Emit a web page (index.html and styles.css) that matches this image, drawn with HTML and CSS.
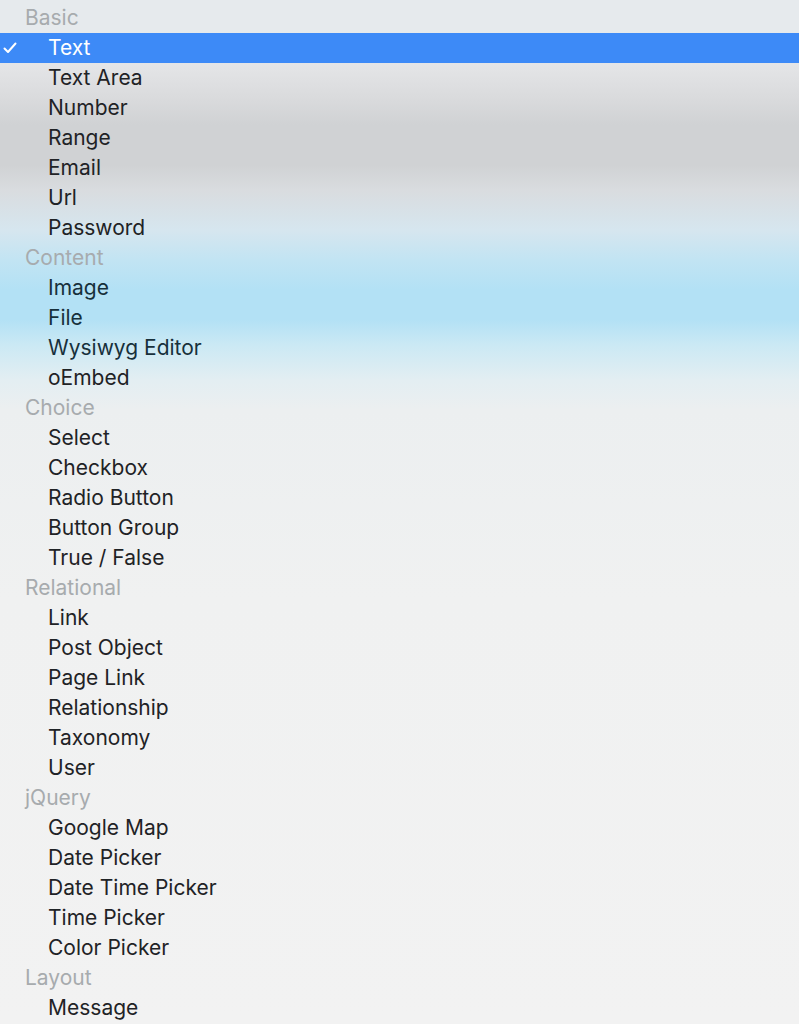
FILE: index.html
```html
<!DOCTYPE html>
<html lang="en">
<head>
    <meta charset="UTF-8">
    <meta name="viewport" content="width=device-width, initial-scale=1.0">
    <title>Field Type</title>
    <link rel="stylesheet" href="styles.css">
</head>
<body>
    <ul class="menu">
        <li class="group">Basic</li>
        <li class="item selected">
            <svg class="check" width="14" height="12" viewBox="0 0 14 12">
                <path d="M1.5 6.5 L5 10 L12.5 1.5" fill="none" stroke="#fff" stroke-width="2" stroke-linecap="round" stroke-linejoin="round"/>
            </svg>
            Text
        </li>
        <li class="item">Text Area</li>
        <li class="item">Number</li>
        <li class="item">Range</li>
        <li class="item">Email</li>
        <li class="item">Url</li>
        <li class="item">Password</li>
        <li class="group">Content</li>
        <li class="item tinted">Image</li>
        <li class="item tinted">File</li>
        <li class="item tinted">Wysiwyg Editor</li>
        <li class="item">oEmbed</li>
        <li class="group">Choice</li>
        <li class="item">Select</li>
        <li class="item">Checkbox</li>
        <li class="item">Radio Button</li>
        <li class="item">Button Group</li>
        <li class="item">True / False</li>
        <li class="group">Relational</li>
        <li class="item">Link</li>
        <li class="item">Post Object</li>
        <li class="item">Page Link</li>
        <li class="item">Relationship</li>
        <li class="item">Taxonomy</li>
        <li class="item">User</li>
        <li class="group">jQuery</li>
        <li class="item">Google Map</li>
        <li class="item">Date Picker</li>
        <li class="item">Date Time Picker</li>
        <li class="item">Time Picker</li>
        <li class="item">Color Picker</li>
        <li class="group">Layout</li>
        <li class="item">Message</li>
    </ul>
</body>
</html>
```

FILE: styles.css
```css
html, body {
    margin: 0;
    height: 100%;
}
body {
    font-family: Inter, "Noto Sans", sans-serif;
    font-size: 21px;
    overflow: hidden;
    background: linear-gradient(to bottom,
        #e6eaed 0px,
        #e6eaed 30px,
        #e4e5e7 65px,
        #d9dadc 100px,
        #d0d2d4 125px,
        #d0d2d4 165px,
        #d9dcdf 190px,
        #d6e6ef 230px,
        #c2e4f3 260px,
        #b3e1f5 290px,
        #b3e1f5 320px,
        #cbe9f4 345px,
        #e3eef2 380px,
        #eceff0 410px,
        #f0f1f1 600px,
        #f2f2f2 1024px);
}
.menu {
    list-style: none;
    margin: 0;
    padding: 3px 0 0;
}
.menu li {
    height: 30px;
    line-height: 30px;
    white-space: nowrap;
    position: relative;
}
.group {
    padding-left: 25px;
    color: #a7abae;
}
.item {
    padding-left: 48px;
    color: #1f2326;
}
.tinted {
    color: #17303b;
}
.selected {
    background: #3d8af7;
    color: #fff;
}
.check {
    position: absolute;
    left: 3px;
    top: 9px;
}
```
